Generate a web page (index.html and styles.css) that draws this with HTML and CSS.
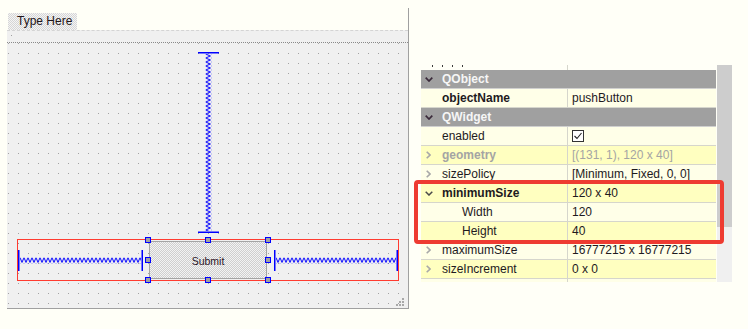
FILE: index.html
```html
<!DOCTYPE html>
<html>
<head>
<meta charset="utf-8">
<link rel="stylesheet" href="styles.css">
</head>
<body>
<div class="page">
  <div class="form">
    <div class="menubar"><div class="typehere">Type Here</div></div>
    <div class="toolbar"><span class="tmark"></span></div>
    <div class="canvas">
      <svg class="vspacer" width="21" height="181" viewBox="0 0 21 181">
        <defs>
          <pattern id="zzv" width="6" height="4" patternUnits="userSpaceOnUse" x="7.5" y="2">
            <path d="M0,0 L5,2 L0,4" stroke="#0000ff" stroke-width="1" fill="none"/>
          </pattern>
        </defs>
        <rect x="0" y="0" width="21" height="1.5" fill="#0000ff"/>
        <rect x="7.5" y="2" width="6" height="177" fill="url(#zzv)"/>
        <rect x="0" y="179.5" width="21" height="1.5" fill="#0000ff"/>
      </svg>
      <div class="hlayout">
        <svg class="hspacer" width="125" height="40" viewBox="0 0 125 40">
          <defs>
            <pattern id="zzh1" width="4" height="6" patternUnits="userSpaceOnUse" x="2" y="17.5">
              <path d="M0,0 L2,5 L4,0" stroke="#0000ff" stroke-width="1" fill="none"/>
            </pattern>
          </defs>
          <rect x="0" y="10" width="1.5" height="21" fill="#0000ff"/>
          <rect x="2" y="17.5" width="121" height="6" fill="url(#zzh1)"/>
          <rect x="123.5" y="10" width="1.5" height="21" fill="#0000ff"/>
        </svg>
        <div class="btn">
          <div class="btn-face">Submit</div>
          <span class="hd h-tl"></span><span class="hd h-tc"></span><span class="hd h-tr"></span>
          <span class="hd h-ml"></span><span class="hd h-mr"></span>
          <span class="hd h-bl"></span><span class="hd h-bc"></span><span class="hd h-br"></span>
        </div>
        <svg class="hspacer right" width="124" height="40" viewBox="0 0 124 40">
          <defs>
            <pattern id="zzh2" width="4" height="6" patternUnits="userSpaceOnUse" x="2" y="17.5">
              <path d="M0,0 L2,5 L4,0" stroke="#0000ff" stroke-width="1" fill="none"/>
            </pattern>
          </defs>
          <rect x="0" y="10" width="1.5" height="21" fill="#0000ff"/>
          <rect x="2" y="17.5" width="120" height="6" fill="url(#zzh2)"/>
          <rect x="122.5" y="10" width="1.5" height="21" fill="#0000ff"/>
        </svg>
      </div>
      <svg class="grip" width="9" height="9" viewBox="0 0 9 9">
        <rect x="6" y="0" width="2" height="2" fill="#a8a8a8"/>
        <rect x="3" y="3" width="2" height="2" fill="#a8a8a8"/>
        <rect x="6" y="3" width="2" height="2" fill="#a8a8a8"/>
        <rect x="0" y="6" width="2" height="2" fill="#a8a8a8"/>
        <rect x="3" y="6" width="2" height="2" fill="#a8a8a8"/>
        <rect x="6" y="6" width="2" height="2" fill="#a8a8a8"/>
      </svg>
    </div>
  </div>

  <div class="panel">
    <div class="table">
      <div class="row top">
        <div class="name"><span class="frag"></span><span class="frag"></span><span class="frag"></span><span class="frag"></span></div>
        <div class="val"></div>
      </div>
      <div class="row group">
        <span class="tw"><svg width="8" height="5" viewBox="0 0 8 5"><path d="M0.7 0.7 L4 4 L7.3 0.7" stroke="#3a2a3a" stroke-width="1.7" fill="none"/></svg></span>
        <span class="gtext">QObject</span>
      </div>
      <div class="row light">
        <div class="name"><span class="tw"></span><b>objectName</b></div>
        <div class="val">pushButton</div>
      </div>
      <div class="row group">
        <span class="tw"><svg width="8" height="5" viewBox="0 0 8 5"><path d="M0.7 0.7 L4 4 L7.3 0.7" stroke="#3a2a3a" stroke-width="1.7" fill="none"/></svg></span>
        <span class="gtext">QWidget</span>
      </div>
      <div class="row light">
        <div class="name"><span class="tw"></span>enabled</div>
        <div class="val"><span class="check"><svg width="10" height="10" viewBox="0 0 10 10"><path d="M1.5 5 L4 7.5 L8.5 2" stroke="#222" stroke-width="1.1" fill="none"/></svg></span></div>
      </div>
      <div class="row yellow disabled">
        <div class="name"><span class="tw"><svg class="rt" width="5" height="8" viewBox="0 0 5 8"><path d="M0.7 0.7 L4 4 L0.7 7.3" stroke="#a8a8a8" stroke-width="1.6" fill="none"/></svg></span><b>geometry</b></div>
        <div class="val">[(131, 1), 120 x 40]</div>
      </div>
      <div class="row light">
        <div class="name"><span class="tw"><svg class="rt" width="5" height="8" viewBox="0 0 5 8"><path d="M0.7 0.7 L4 4 L0.7 7.3" stroke="#a8a8a8" stroke-width="1.6" fill="none"/></svg></span>sizePolicy</div>
        <div class="val">[Minimum, Fixed, 0, 0]</div>
      </div>
      <div class="row yellow">
        <div class="name"><span class="tw"><svg width="8" height="5" viewBox="0 0 8 5"><path d="M0.7 0.7 L4 4 L7.3 0.7" stroke="#4a4a4a" stroke-width="1.5" fill="none"/></svg></span><b>minimumSize</b></div>
        <div class="val">120 x 40</div>
      </div>
      <div class="row light">
        <div class="name child">Width</div>
        <div class="val">120</div>
      </div>
      <div class="row yellow">
        <div class="name child">Height</div>
        <div class="val">40</div>
      </div>
      <div class="row light">
        <div class="name"><span class="tw"><svg class="rt" width="5" height="8" viewBox="0 0 5 8"><path d="M0.7 0.7 L4 4 L0.7 7.3" stroke="#a8a8a8" stroke-width="1.6" fill="none"/></svg></span>maximumSize</div>
        <div class="val">16777215 x 16777215</div>
      </div>
      <div class="row yellow">
        <div class="name"><span class="tw"><svg class="rt" width="5" height="8" viewBox="0 0 5 8"><path d="M0.7 0.7 L4 4 L0.7 7.3" stroke="#a8a8a8" stroke-width="1.6" fill="none"/></svg></span>sizeIncrement</div>
        <div class="val">0 x 0</div>
      </div>
      <div class="row light tail">
        <div class="name"></div>
        <div class="val"></div>
      </div>
    </div>
    <div class="sb"><div class="thumb"></div><div class="track"></div></div>
    <div class="hl"></div>
  </div>
</div>
</body>
</html>
```

FILE: styles.css
```css
html, body {
  margin: 0;
  padding: 0;
  width: 748px;
  height: 329px;
  overflow: hidden;
  background: #fffff7;
  font-family: "Liberation Sans", Arial, sans-serif;
  font-size: 12px;
  color: #1e1a1e;
}

.page {
  display: flex;
  align-items: flex-start;
}

/* ---------- designer form ---------- */
.form {
  margin: 8px 0 0 7px;
  width: 401px;
  border-right: 1px solid #a0a0a0;
}

.menubar {
  height: 22px;
  box-sizing: border-box;
  padding: 5px 0 0 1px;
}

.typehere {
  width: 69px;
  height: 17px;
  box-sizing: border-box;
  padding-left: 9px;
  line-height: 17px;
  font-size: 12px;
  color: #1e1418;
  background-color: #e4e4e4;
  background-image: repeating-conic-gradient(#d6d6d6 0 25%, #f4f4f4 0 50%);
  background-size: 2px 2px;
}

.toolbar {
  height: 11px;
  border-top: 1px dashed #d4d4d4;
  border-bottom: 1px dotted #8a8a8a;
  background: #f0f0f0;
  display: flex;
}

.tmark {
  width: 1px;
  height: 1px;
  margin: 4px 0 0 4px;
  background: #a0a0a0;
}

.canvas {
  position: relative;
  height: 266px;
  box-sizing: border-box;
  padding-top: 9px;
  border-bottom: 1px solid #a0a0a0;
  background-color: #a2a2a2;
  background-image:
    linear-gradient(to right, transparent 1px, #f0f0f0 1px),
    linear-gradient(to bottom, transparent 1px, #f0f0f0 1px);
  background-size: 10px 10px;
  background-position: 1px 0;
}

.vspacer {
  display: block;
  margin-left: 191px;
}

.hlayout {
  display: flex;
  margin: 6px 0 0 10px;
  width: 382px;
  height: 42px;
  box-sizing: border-box;
  border: 1px solid #ff3b30;
}

.hspacer {
  display: block;
  flex: none;
}

.hspacer.right {
  margin-left: 6px;
}

.btn {
  position: relative;
  flex: none;
  width: 120px;
  height: 40px;
  margin-left: 5px;
  box-sizing: border-box;
  padding: 1px;
}

.btn-face {
  height: 100%;
  box-sizing: border-box;
  border: 1px solid #a4a4a4;
  background-color: #e2e2e2;
  background-image: repeating-conic-gradient(#cfcfcf 0 25%, #f3f3f3 0 50%);
  background-size: 2px 2px;
  display: flex;
  align-items: center;
  justify-content: center;
  font-size: 10.5px;
  color: #2a1426;
  padding-top: 1px;
}

.hd {
  position: absolute;
  width: 6px;
  height: 6px;
  box-sizing: border-box;
  border: 1px solid #0000ff;
  background: #a0a0a0;
}
.h-tl { left: -3px; top: -3px; }
.h-tc { left: 57px; top: -3px; }
.h-tr { left: 117px; top: -3px; }
.h-ml { left: -3px; top: 17px; }
.h-mr { left: 117px; top: 17px; }
.h-bl { left: -3px; top: 37px; }
.h-bc { left: 57px; top: 37px; }
.h-br { left: 117px; top: 37px; }

.grip {
  position: absolute;
  right: 3px;
  bottom: 1px;
}

/* ---------- property editor ---------- */
.panel {
  position: relative;
  display: flex;
  margin: 65px 0 0 12px;
}

.table {
  width: 295px;
}

.row {
  display: flex;
  height: 19px;
  box-sizing: border-box;
  border-bottom: 1px solid #d6d6cc;
  line-height: 18px;
  white-space: nowrap;
}

.row.top {
  height: 5px;
  border-bottom: none;
}

.row.tail {
  height: 3px;
  border-bottom: none;
}

.row.light { background: #ffffe8; }
.row.yellow { background: #ffffc0; }

.row.group {
  background: #a0a0a0;
  border-bottom-color: #d0d0d0;
  align-items: center;
  padding-left: 4px;
}

.gtext {
  font-weight: bold;
  color: #f6f6f6;
  line-height: 18px;
}

.name {
  width: 147px;
  flex: none;
  box-sizing: border-box;
  padding-left: 4px;
  display: flex;
  align-items: center;
  border-right: 1px solid #d6d6cc;
}

.name.child {
  padding-left: 41px;
}

.val {
  flex: 1;
  padding-left: 4px;
  display: flex;
  align-items: center;
}

.tw {
  width: 17px;
  flex: none;
  display: flex;
  align-items: center;
}

.tw .rt {
  margin-left: 1px;
}

.disabled .name,
.disabled .val {
  color: #a4a4a4;
}

.frag {
  width: 1px;
  height: 2px;
  margin-left: 9px;
  align-self: flex-start;
  background: #3a3a3a;
}
.frag:first-child { margin-left: 7px; }

.check {
  width: 12px;
  height: 12px;
  box-sizing: border-box;
  border: 1px solid #333;
  background: #fff;
  display: flex;
  align-items: center;
  justify-content: center;
}

.sb {
  width: 15px;
  margin-left: 1px;
  display: flex;
  flex-direction: column;
  height: 217px;
}

.thumb {
  height: 162px;
  background: #cdcdcd;
}

.track {
  flex: 1;
  background: #f0f0f0;
}

.hl {
  position: absolute;
  left: -7px;
  top: 115px;
  width: 310px;
  height: 64px;
  box-sizing: border-box;
  border: 4px solid #ee3b31;
  border-radius: 4px;
}
```
